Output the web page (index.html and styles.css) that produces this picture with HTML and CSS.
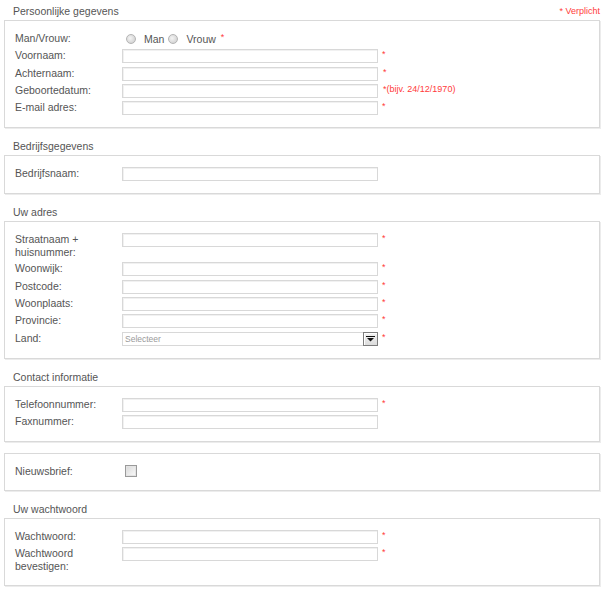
FILE: index.html
```html
<!DOCTYPE html>
<html lang="nl">
<head>
  <meta charset="UTF-8" />
  <title>Registreren</title>
  <link rel="stylesheet" href="styles.css">
</head>
<body>

  <form class="register-form">

    <!-- Persoonlijke gegevens -->
    <section class="section">
      <div class="section-head">
        <span class="section-title">Persoonlijke gegevens</span>
        <span class="required-note">* Verplicht</span>
      </div>
      <div class="box">
        <div class="row">
          <span class="label">Man/Vrouw:</span>
          <div class="radios">
            <input type="radio" name="gender" id="g-man" class="radio">
            <label for="g-man" class="radio-label">Man</label>
            <input type="radio" name="gender" id="g-vrouw" class="radio">
            <label for="g-vrouw" class="radio-label">Vrouw</label>
            <span class="req req-inline">*</span>
          </div>
        </div>
        <div class="row">
          <label class="label" for="voornaam">Voornaam:</label>
          <input type="text" id="voornaam" class="field">
          <span class="req">*</span>
        </div>
        <div class="row">
          <label class="label" for="achternaam">Achternaam:</label>
          <input type="text" id="achternaam" class="field">
          <span class="req req-wide">*</span>
        </div>
        <div class="row">
          <label class="label" for="geboortedatum">Geboortedatum:</label>
          <input type="text" id="geboortedatum" class="field">
          <span class="req req-wide">*(bijv. 24/12/1970)</span>
        </div>
        <div class="row">
          <label class="label" for="email">E-mail adres:</label>
          <input type="text" id="email" class="field">
          <span class="req">*</span>
        </div>
      </div>
    </section>

    <!-- Bedrijfsgegevens -->
    <section class="section">
      <div class="section-head">
        <span class="section-title">Bedrijfsgegevens</span>
      </div>
      <div class="box">
        <div class="row">
          <label class="label" for="bedrijfsnaam">Bedrijfsnaam:</label>
          <input type="text" id="bedrijfsnaam" class="field">
        </div>
      </div>
    </section>

    <!-- Uw adres -->
    <section class="section">
      <div class="section-head">
        <span class="section-title">Uw adres</span>
      </div>
      <div class="box">
        <div class="row">
          <label class="label" for="straat">Straatnaam +<br>huisnummer:</label>
          <input type="text" id="straat" class="field">
          <span class="req">*</span>
        </div>
        <div class="row">
          <label class="label" for="woonwijk">Woonwijk:</label>
          <input type="text" id="woonwijk" class="field">
          <span class="req">*</span>
        </div>
        <div class="row">
          <label class="label" for="postcode">Postcode:</label>
          <input type="text" id="postcode" class="field">
          <span class="req">*</span>
        </div>
        <div class="row">
          <label class="label" for="woonplaats">Woonplaats:</label>
          <input type="text" id="woonplaats" class="field">
          <span class="req">*</span>
        </div>
        <div class="row">
          <label class="label" for="provincie">Provincie:</label>
          <input type="text" id="provincie" class="field">
          <span class="req">*</span>
        </div>
        <div class="row">
          <span class="label">Land:</span>
          <div class="select">
            <span class="select-text">Selecteer</span>
            <span class="select-btn">
              <svg width="9" height="6" viewBox="0 0 9 6">
                <rect x="0" y="0" width="9" height="1" fill="#111"/>
                <path d="M1 2 H8 L4.5 5.5 Z" fill="#111"/>
              </svg>
            </span>
          </div>
          <span class="req">*</span>
        </div>
      </div>
    </section>

    <!-- Contact informatie -->
    <section class="section">
      <div class="section-head">
        <span class="section-title">Contact informatie</span>
      </div>
      <div class="box">
        <div class="row">
          <label class="label" for="telefoon">Telefoonnummer:</label>
          <input type="text" id="telefoon" class="field">
          <span class="req">*</span>
        </div>
        <div class="row">
          <label class="label" for="fax">Faxnummer:</label>
          <input type="text" id="fax" class="field">
        </div>
      </div>
    </section>

    <!-- Nieuwsbrief -->
    <section class="section section-plain">
      <div class="box">
        <div class="row row-check">
          <label class="label" for="nieuwsbrief">Nieuwsbrief:</label>
          <span class="check-wrap"><input type="checkbox" id="nieuwsbrief" class="checkbox"></span>
        </div>
      </div>
    </section>

    <!-- Uw wachtwoord -->
    <section class="section">
      <div class="section-head">
        <span class="section-title">Uw wachtwoord</span>
      </div>
      <div class="box">
        <div class="row">
          <label class="label" for="ww">Wachtwoord:</label>
          <input type="password" id="ww" class="field">
          <span class="req">*</span>
        </div>
        <div class="row">
          <label class="label" for="ww2">Wachtwoord<br>bevestigen:</label>
          <input type="password" id="ww2" class="field">
          <span class="req">*</span>
        </div>
      </div>
    </section>

  </form>

</body>
</html>
```

FILE: styles.css
```css
/* --- BASE --- */
body {
  margin: 0;
  background: #ffffff;
  color: #555555;
  font-family: "Liberation Sans", Arial, sans-serif;
  font-size: 10.5px;
}
.register-form {
  padding: 4px 9px 0 4px;
}

/* --- SECTIONS --- */
.section { margin-bottom: 11px; }
.section-plain { margin-top: 5px; }
.section-head {
  display: flex;
  justify-content: space-between;
  align-items: center;
  height: 14px;
  margin-bottom: 2px;
  padding-left: 9px;
}
.section-title { line-height: 14px; color: #555; }
.required-note { font-size: 9px; color: #ff3b3b; }
.box {
  border: 1px solid #d9d9d9;
  box-shadow: 1px 1px 0 #ececec;
  padding: 11px 10px 12px;
  display: flex;
  flex-direction: column;
  gap: 3.3px;
}

/* --- ROWS --- */
.row {
  display: grid;
  grid-template-columns: 107px 256px auto;
  align-items: start;
  min-height: 14px;
}
.row-check { min-height: 13px; align-items: center; }
.label { line-height: 13px; color: #555; }
.field {
  box-sizing: border-box;
  width: 256px;
  height: 14px;
  margin: 0;
  padding: 0 2px;
  border: 1px solid #d8d8d8;
  box-shadow: inset 1px 1px 0 #f1f1f1;
  background: #fff;
  font: inherit;
  outline: none;
}
.req {
  margin-left: 4px;
  font-size: 9px;
  line-height: 11px;
  color: #ff3b3b;
}
.req-wide { margin-left: 5px; }

/* --- RADIOS --- */
.radios {
  grid-column: 2 / 4;
  display: flex;
  align-items: center;
  height: 14px;
}
.radio {
  appearance: none;
  width: 10px; height: 10px;
  margin: 0 0 0 4px;
  border: 1px solid #b4b4b4;
  border-radius: 50%;
  background: radial-gradient(circle at 40% 40%, #f4f4f4 0%, #d6d6d6 70%, #c8c8c8 100%);
  box-sizing: border-box;
}
.radio + .radio-label { margin-left: 8px; margin-right: 3px; }
.radio-label { line-height: 13px; }
#g-vrouw { margin-left: 1px; }
#g-vrouw + .radio-label { margin-left: 8px; margin-right: 0; }
.req-inline { margin-left: 5px; align-self: flex-start; }

/* --- SELECT --- */
.select {
  box-sizing: border-box;
  width: 256px;
  height: 14px;
  display: flex;
  border: 1px solid #d8d8d8;
  background: #fff;
}
.select-text {
  flex: 1;
  padding-left: 2px;
  font-size: 8.5px;
  line-height: 12px;
  color: #9a9a9a;
}
.select-btn {
  box-sizing: border-box;
  width: 15px;
  height: 14px;
  margin: -1px -1px 0 0;
  border: 1px solid #7d7d7d;
  box-shadow: inset 1px 1px 0 #fff;
  background: linear-gradient(#f2f2f2, #dcdcdc);
  display: flex;
  align-items: center;
  justify-content: center;
}

/* --- CHECKBOX --- */
.check-wrap { display: flex; height: 13px; align-items: center; }
.checkbox {
  appearance: none;
  box-sizing: border-box;
  width: 12px; height: 12px;
  margin: 0 0 0 3px;
  border: 1px solid #9a9a9a;
  box-shadow: inset 0 0 0 1px #e4e4e4;
  background: linear-gradient(135deg, #d8d8d8, #fbfbfb);
}
```
